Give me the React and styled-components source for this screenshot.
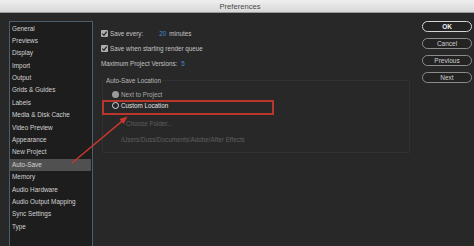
import React from "react";
import styled, { createGlobalStyle } from "styled-components";

const GlobalStyle = createGlobalStyle`
  html, body {
    margin: 0;
    padding: 0;
    background: #282828;
  }
  * {
    box-sizing: border-box;
  }
`;

const sections = [
  "General",
  "Previews",
  "Display",
  "Import",
  "Output",
  "Grids & Guides",
  "Labels",
  "Media & Disk Cache",
  "Video Preview",
  "Appearance",
  "New Project",
  "Auto-Save",
  "Memory",
  "Audio Hardware",
  "Audio Output Mapping",
  "Sync Settings",
  "Type",
];

const CheckIcon = () => (
  <svg width="7" height="7" viewBox="0 0 7 7">
    <path d="M1.3 3.6 L2.9 5.2 L5.8 1.6" fill="none" stroke="#2b2b2b" strokeWidth="1.3" />
  </svg>
);

const Preferences = () => {
  return (
    <>
      <GlobalStyle />
      <Window>
        <TitleBar>Preferences</TitleBar>
        <Body>
          <Sidebar>
            {sections.map((s) => (
              <SidebarItem key={s} $active={s === "Auto-Save"}>
                {s}
              </SidebarItem>
            ))}
          </Sidebar>
          <Main>
            <Row>
              <Checkbox>
                <CheckIcon />
              </Checkbox>
              <Label>Save every:</Label>
              <Value $left={16}>20</Value>
              <Label>minutes</Label>
            </Row>
            <Row>
              <Checkbox>
                <CheckIcon />
              </Checkbox>
              <Label>Save when starting render queue</Label>
            </Row>
            <Row>
              <Label>Maximum Project Versions:</Label>
              <Value $left={4}>5</Value>
            </Row>
            <Group>
              <Legend>Auto-Save Location</Legend>
              <RadioRow>
                <Radio $filled />
                <RadioLabel $dim>Next to Project</RadioLabel>
              </RadioRow>
              <RadioRow>
                <Radio />
                <RadioLabel>Custom Location</RadioLabel>
              </RadioRow>
              <Disabled $indent={21} $top={7}>Choose Folder...</Disabled>
              <Disabled $indent={16} $top={5}>/Users/Duss/Documents/Adobe/After Effects</Disabled>
            </Group>
          </Main>
          <Buttons>
            <Button $primary>OK</Button>
            <Button>Cancel</Button>
            <Button>Previous</Button>
            <Button>Next</Button>
          </Buttons>
        </Body>
        <Highlight />
        <Arrow width="474" height="246" viewBox="0 0 474 246">
          <line x1="72" y1="163" x2="123" y2="120.3" stroke="#c8372d" strokeWidth="1.5" />
          <polygon points="127.5,116.6 123.6,124 119.4,119" fill="#c8372d" />
        </Arrow>
      </Window>
    </>
  );
};

const Window = styled.div`
  position: relative;
  width: 474px;
  height: 246px;
  overflow: hidden;
  background: #282828;
  font-family: "Liberation Sans", Arial, sans-serif;
`;

const TitleBar = styled.div`
  height: 13px;
  line-height: 13px;
  padding-left: 6px;
  text-align: center;
  font-size: 7.6px;
  color: #4a4a4a;
  background: linear-gradient(#efefef, #d8d8d8);
  border-bottom: 1px solid #9a9a9a;
`;

const Body = styled.div`
  display: flex;
  align-items: flex-start;
  padding: 8px 2px 0 9px;
`;

const Sidebar = styled.div`
  width: 84px;
  height: 240px;
  flex-shrink: 0;
  padding: 0.5px 1px 0 0;
  background: #1d1d1d;
  border: 1px solid #4e5d6c;
  border-bottom: none;
`;

const SidebarItem = styled.div`
  height: 12.4px;
  line-height: 12.4px;
  padding-left: 2px;
  font-size: 6.4px;
  color: #d2d2d2;
  white-space: nowrap;
  background: ${(p) => (p.$active ? "#505050" : "transparent")};
`;

const Main = styled.div`
  flex: 1;
  padding: 5px 0 0 8px;
`;

const Row = styled.div`
  display: flex;
  align-items: center;
  height: 15px;
`;

const Checkbox = styled.span`
  display: flex;
  width: 7px;
  height: 7px;
  margin-right: 2px;
  border-radius: 1px;
  background: #aeaeae;
`;

const Label = styled.span`
  font-size: 6.3px;
  color: #c4c4c4;
  white-space: nowrap;
`;

const Value = styled.span`
  margin: 0 3px 0 ${(p) => p.$left}px;
  font-size: 6.3px;
  color: #3f8fd8;
`;

const Group = styled.fieldset`
  width: 308px;
  height: 76px;
  margin: 5.5px 0 0 1px;
  padding: 0 0 0 2px;
  border: 1px solid #313131;
  border-radius: 1px;
`;

const Legend = styled.legend`
  padding: 0 1px;
  font-size: 6.3px;
  line-height: 8px;
  color: #bababa;
`;

const RadioRow = styled.div`
  display: flex;
  align-items: center;
  height: 11px;
  padding-left: 7px;
  &:first-of-type {
    margin-top: 4.5px;
  }
`;

const Radio = styled.span`
  width: 7px;
  height: 7px;
  margin-right: 2px;
  border-radius: 50%;
  background: ${(p) => (p.$filled ? "#9a9a9a" : "#262626")};
  border: ${(p) => (p.$filled ? "none" : "1px solid #dcdcdc")};
`;

const RadioLabel = styled.span`
  font-size: 6.3px;
  color: ${(p) => (p.$dim ? "#a8a8a8" : "#e2e2e2")};
  white-space: nowrap;
`;

const Disabled = styled.div`
  height: 11px;
  line-height: 11px;
  margin-top: ${(p) => p.$top}px;
  padding-left: ${(p) => p.$indent}px;
  font-size: 6.3px;
  color: #5f5f5f;
  white-space: nowrap;
`;

const Buttons = styled.div`
  display: flex;
  flex-direction: column;
  gap: 6px;
  width: 50px;
  flex-shrink: 0;
`;

const Button = styled.button`
  height: 11px;
  padding: 0;
  font-family: inherit;
  font-size: 6.5px;
  font-weight: ${(p) => (p.$primary ? 700 : 400)};
  line-height: 9px;
  color: ${(p) => (p.$primary ? "#f2f2f2" : "#cfcfcf")};
  background: #232323;
  border: ${(p) => (p.$primary ? "1.2px solid #d4d4d4" : "1px solid #8c8c8c")};
  border-radius: 6px;
`;

const Highlight = styled.div`
  position: absolute;
  left: 102px;
  top: 100px;
  width: 172px;
  height: 15px;
  border: 2px solid #b8362c;
  pointer-events: none;
`;

const Arrow = styled.svg`
  position: absolute;
  left: 0;
  top: 0;
  pointer-events: none;
`;

export default Preferences;
